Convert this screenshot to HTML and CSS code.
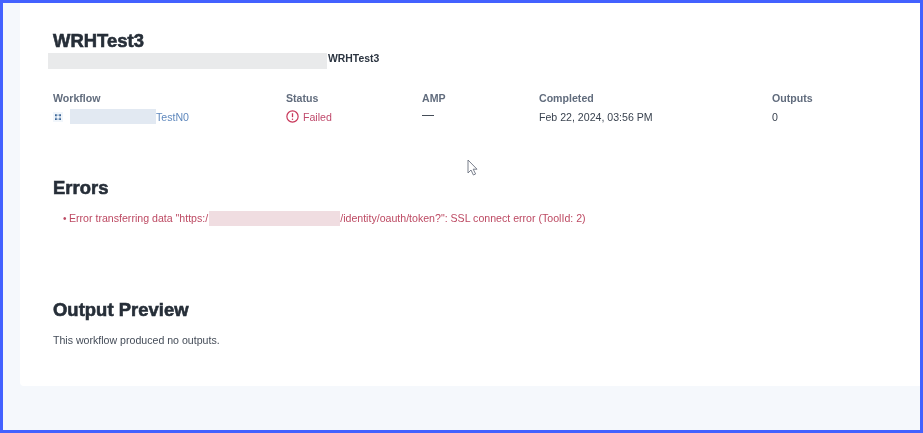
FILE: index.html
```html
<!DOCTYPE html>
<html lang="en">
<head>
<meta charset="utf-8">
<title>WRHTest3</title>
<link rel="stylesheet" href="styles.css">
</head>
<body>
<div class="frame">
  <main class="card">
    <h1 class="title">WRHTest3</h1>
    <div class="subtitle"><span class="redact redact-sub"></span><span>WRHTest3</span></div>
    <section class="meta">
      <div class="cell">
        <div class="label">Workflow</div>
        <div class="value link">
          <svg class="wf-icon" viewBox="0 0 10 10" aria-hidden="true"><rect width="10" height="10" fill="#f1f6fb"/><path d="M2 2.2h1.8v1.8H2zM6.2 2.2H8v1.8H6.2zM2 6.2h1.8V8H2zM6.2 6.2H8V8H6.2z" fill="#3a6496"/><path d="M3.8 3.1h2.4M3.8 7.1h2.4M3 4v2.2M7 4v2.2" stroke="#7d9cc0" stroke-width=".8" fill="none"/></svg>
          <span class="redact redact-link"></span><span>TestN0</span>
        </div>
      </div>
      <div class="cell">
        <div class="label">Status</div>
        <div class="value failed">
          <svg class="st-icon" viewBox="0 0 12 12" aria-hidden="true"><circle cx="6" cy="6" r="5.2" fill="none" stroke="#c8385a" stroke-width="1.1"/><path d="M6 3v3.6" stroke="#c8385a" stroke-width="1.2"/><circle cx="6" cy="8.6" r=".7" fill="#c8385a"/></svg>
          <span>Failed</span>
        </div>
      </div>
      <div class="cell">
        <div class="label">AMP</div>
        <div class="value dash">—</div>
      </div>
      <div class="cell">
        <div class="label">Completed</div>
        <div class="value">Feb 22, 2024, 03:56 PM</div>
      </div>
      <div class="cell">
        <div class="label">Outputs</div>
        <div class="value">0</div>
      </div>
    </section>
    <section class="errors">
      <h2 class="heading">Errors</h2>
      <ul class="error-list">
        <li>Error transferring data "https:/<span class="redact redact-url"></span>/identity/oauth/token?": SSL connect error (ToolId: 2)</li>
      </ul>
    </section>
    <section class="preview">
      <h2 class="heading">Output Preview</h2>
      <p class="note">This workflow produced no outputs.</p>
    </section>
  </main>
  <svg class="cursor" viewBox="0 0 12 18" aria-hidden="true"><path d="M1 1v13l3-3 2.4 5 2.2-1-2.4-4.8H10z" fill="#fff" stroke="#6b7280" stroke-width=".9"/></svg>
</div>
</body>
</html>
```
FILE: styles.css
```css
* { box-sizing: border-box; }
html, body { margin: 0; height: 100%; }
body {
  font-family: "Liberation Sans", Arial, sans-serif;
  color: #2b3440;
  background: #f5f8fb;
}
.frame {
  position: relative;
  height: 433px;
  border: 3px solid #4361ff;
  padding-left: 17px;
  background: #f5f8fc;
  overflow: hidden;
}
.card {
  height: 383px;
  background: #fff;
  border-bottom-left-radius: 4px;
  padding: 28px 0 0 33px;
  filter: blur(.35px);
}
.title, .heading {
  margin: 0;
  font-size: 18.4px;
  line-height: 20px;
  font-weight: 700;
  letter-spacing: .05px;
  color: #262e38;
  -webkit-text-stroke: .6px #262e38;
}
.subtitle {
  display: flex;
  align-items: flex-start;
  margin: 2px 0 0 -5px;
  height: 16px;
  font-size: 10.4px;
  line-height: 11px;
  font-weight: 700;
}
.redact { display: inline-block; }
.redact-sub { width: 279px; height: 16px; margin-right: 1px; background: #e9eaeb; }
.meta {
  display: grid;
  grid-template-columns: 233px 136px 117px 233px 100px;
  margin-top: 23px;
}
.label {
  font-size: 10.6px;
  line-height: 12px;
  font-weight: 700;
  color: #616c7d;
}
.value {
  display: flex;
  align-items: center;
  height: 15px;
  margin-top: 5px;
  font-size: 10.6px;
  color: #3a4350;
}
.link { color: #5f88bd; }
.wf-icon { width: 10px; height: 10px; margin-right: 7px; }
.redact-link { width: 86px; height: 15px; background: #e2e9f2; }
.failed { color: #c04a6c; }
.st-icon { width: 13px; height: 13px; margin-right: 4px; }
.dash { color: #2b3440; font-size: 12px; margin-top: 3px; }
.errors { margin-top: 54px; }
.error-list {
  margin: 13px 0 0;
  padding: 0 0 0 10px;
  list-style: none;
  font-size: 10.6px;
  line-height: 15px;
  color: #bd4a63;
}
.error-list li::before {
  content: "•";
  display: inline-block;
  width: 6px;
  font-size: 10px;
}
.redact-url { width: 131px; height: 15px; margin-left: 1px; vertical-align: top; background: #f0dde1; }
.preview { margin-top: 74px; }
.note {
  margin: 14px 0 0;
  font-size: 10.6px;
  line-height: 13px;
  color: #444c58;
}
.cursor {
  position: absolute;
  left: 464px;
  top: 156px;
  width: 12px;
  height: 18px;
}
```
